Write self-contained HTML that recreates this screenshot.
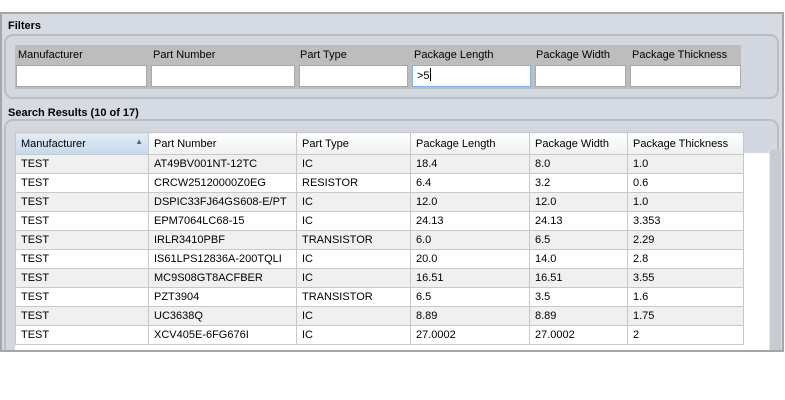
<!DOCTYPE html><html><head><style>
body{margin:0;width:785px;height:400px;background:#fff;font-family:"Liberation Sans",sans-serif;font-size:11px;color:#000;position:relative;overflow:hidden}
.abs{position:absolute}
.outer{left:0;top:12px;width:780px;height:338px;background:#d6dbe3;border:2px solid #a6a6a6;border-top-width:2px}
.grp{border:2px solid #b8bec8;border-radius:9px;background:#d3d8e0}
.lbl{font-weight:bold;font-size:11px}
.fh{background:#bdbdbd}
.in{background:#fff;border:1px solid #a9a9a9;height:22px;box-sizing:border-box;top:65px}
table{border-collapse:collapse;table-layout:fixed}
td{border:1px solid #c8c8c8;height:17px;padding:1px 0 0 5px;line-height:17px;white-space:nowrap;overflow:hidden}
th{font-weight:normal;text-align:left;padding:1px 0 0 5px;height:20px;border:1px solid #c8c8c8;background:linear-gradient(#fff,#eef0f3);}
tr:nth-child(even) td{background:#f0f0f0}
tr:nth-child(odd) td{background:#fff}
</style></head><body>
<div class="abs outer"></div>
<div class="abs lbl" style="left:8px;top:20px">Filters</div>
<div class="abs grp" style="left:4px;top:34px;width:771px;height:61px"></div>
<div class="abs fh" style="left:15px;top:45px;width:726px;height:44px"></div>
<div class="abs" style="left:18px;top:49px">Manufacturer</div>
<div class="abs" style="left:153px;top:49px">Part Number</div>
<div class="abs" style="left:300px;top:49px">Part Type</div>
<div class="abs" style="left:414px;top:49px">Package Length</div>
<div class="abs" style="left:536px;top:49px">Package Width</div>
<div class="abs" style="left:632px;top:49px">Package Thickness</div>
<div class="abs in" style="left:16px;width:131px"></div>
<div class="abs in" style="left:151px;width:144px"></div>
<div class="abs in" style="left:299px;width:109px"></div>
<div class="abs in" style="left:412px;width:119px;border-color:#7eb4ea;padding-left:4px;line-height:20px;font-size:11px">&gt;5<span style="display:inline-block;width:1px;height:13px;background:#000;vertical-align:-2px"></span></div>
<div class="abs in" style="left:535px;width:91px"></div>
<div class="abs in" style="left:630px;width:111px"></div>
<div class="abs lbl" style="left:8px;top:107px">Search Results (10 of 17)</div>
<div class="abs grp" style="left:4px;top:119px;width:771px;height:260px"></div>
<div class="abs" style="left:15px;top:153px;width:754px;height:198px;background:#fff"></div>
<div class="abs" style="left:769px;top:150px;width:11px;height:201px;background:#c8ccd2;border-left:1px solid #e8eaee"></div>
<table class="abs" style="left:15px;top:132px;width:728px">
<colgroup><col style="width:133px"><col style="width:148px"><col style="width:114px"><col style="width:119px"><col style="width:98px"><col style="width:116px"></colgroup>
<tr><th style="background:linear-gradient(#e3edf7,#c4d8ec);position:relative">Manufacturer<span style="position:absolute;right:5px;top:4px;font-size:8px;color:#4a6a8a">▲</span></th><th>Part Number</th><th>Part Type</th><th>Package Length</th><th>Package Width</th><th>Package Thickness</th></tr>
<tr><td>TEST</td><td>AT49BV001NT-12TC</td><td>IC</td><td>18.4</td><td>8.0</td><td>1.0</td></tr>
<tr><td>TEST</td><td>CRCW25120000Z0EG</td><td>RESISTOR</td><td>6.4</td><td>3.2</td><td>0.6</td></tr>
<tr><td>TEST</td><td>DSPIC33FJ64GS608-E/PT</td><td>IC</td><td>12.0</td><td>12.0</td><td>1.0</td></tr>
<tr><td>TEST</td><td>EPM7064LC68-15</td><td>IC</td><td>24.13</td><td>24.13</td><td>3.353</td></tr>
<tr><td>TEST</td><td>IRLR3410PBF</td><td>TRANSISTOR</td><td>6.0</td><td>6.5</td><td>2.29</td></tr>
<tr><td>TEST</td><td>IS61LPS12836A-200TQLI</td><td>IC</td><td>20.0</td><td>14.0</td><td>2.8</td></tr>
<tr><td>TEST</td><td>MC9S08GT8ACFBER</td><td>IC</td><td>16.51</td><td>16.51</td><td>3.55</td></tr>
<tr><td>TEST</td><td>PZT3904</td><td>TRANSISTOR</td><td>6.5</td><td>3.5</td><td>1.6</td></tr>
<tr><td>TEST</td><td>UC3638Q</td><td>IC</td><td>8.89</td><td>8.89</td><td>1.75</td></tr>
<tr><td>TEST</td><td>XCV405E-6FG676I</td><td>IC</td><td>27.0002</td><td>27.0002</td><td>2</td></tr>
</table>
<div class="abs" style="left:0;top:350px;width:784px;height:2px;background:#a6a6a6"></div>
<div class="abs" style="left:0;top:352px;width:785px;height:48px;background:#fff"></div>
</body></html>
